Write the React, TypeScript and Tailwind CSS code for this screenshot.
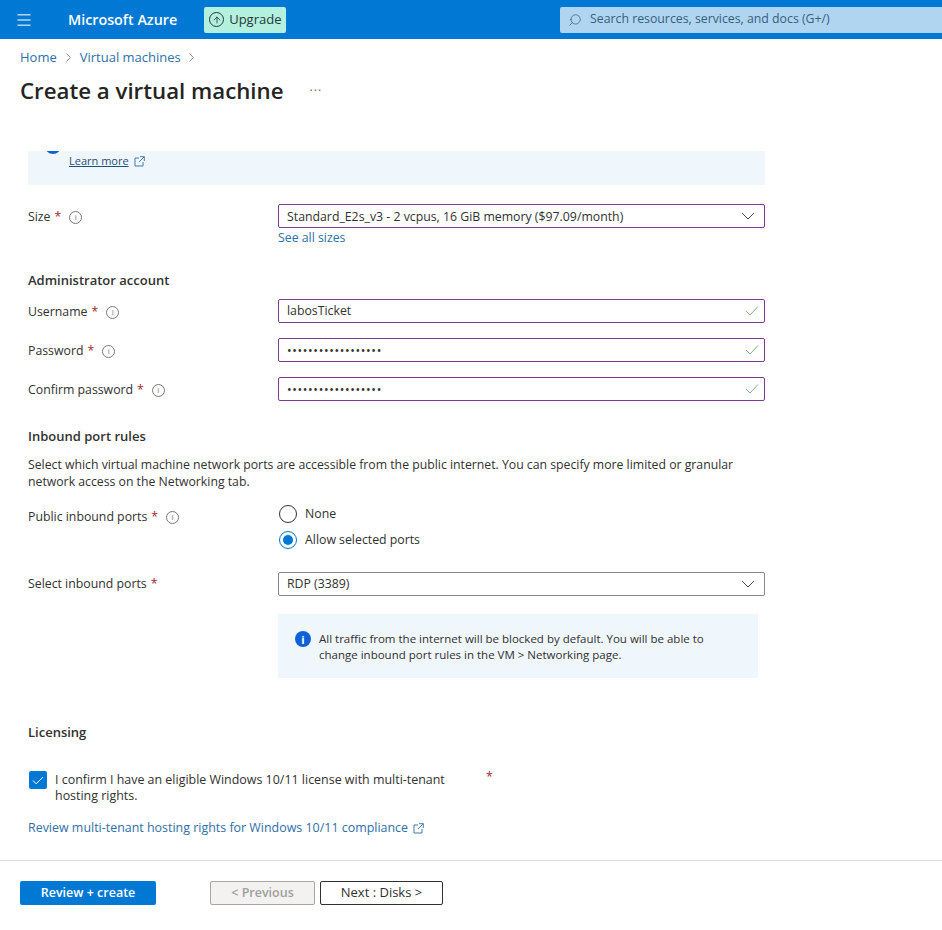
import React from 'react';
import { Search, ArrowUp, Menu, ChevronRight } from 'lucide-react';

const font = "font-['Open_Sans',sans-serif]";

const Req = () => <span className="text-[#a4262c] ml-1">*</span>;

const Tip = () => (
  <span className="ml-2 inline-flex h-[13px] w-[13px] items-center justify-center rounded-full border border-[#777] text-[8px] leading-none text-[#777]">i</span>
);

const Chevron = () => (
  <svg width="14" height="8" viewBox="0 0 14 8" fill="none" className="mr-[1px] text-[#444]">
    <path d="M1 1l6 6 6-6" stroke="currentColor" strokeWidth="1" />
  </svg>
);

const Tick = () => (
  <svg width="14" height="10" viewBox="0 0 14 10" fill="none" className="text-[#7fb07b]">
    <path d="M1 5l4 4 8-8.5" stroke="currentColor" strokeWidth="1" />
  </svg>
);

const LinkOut = () => (
  <svg width="11" height="11" viewBox="0 0 11 11" fill="none" className="ml-[5px] inline-block text-[#2f6fa8]">
    <path d="M5 2H1v8h8V6M6 .7h4.3V5M10.3.7L5 6" stroke="currentColor" strokeWidth="0.9" />
  </svg>
);

const Field = ({ label, value, className = '' }: { label: string; value: string; className?: string }) => (
  <div className={`flex items-center ${className}`}>
    <div className="w-[250px] pt-[2px] flex items-center text-[#323130]">
      {label}
      <Req />
      <Tip />
    </div>
    <div className="w-[487px] h-6 border border-[#7a3b8f] rounded-[2px] flex items-center justify-between pl-2 pr-[5px]">
      <span className={value.startsWith('•') ? 'tracking-[0.65px] pt-[2px]' : ''}>{value}</span>
      <Tick />
    </div>
  </div>
);

export default function App() {
  return (
    <div className={`${font} h-[930px] w-[942px] bg-white text-[12.3px] text-[#323130] flex flex-col overflow-hidden`}>
      <header className="h-[39px] bg-[#0078d4] flex items-center shrink-0">
        <Menu size={18} strokeWidth={2} className="ml-[15px] text-[#b3d7f2]" />
        <span className="ml-[35px] text-[14.3px] font-semibold text-white">Microsoft Azure</span>
        <div className="ml-[27px] h-[26px] w-[82px] rounded-[2px] bg-[#b4f0de] flex items-center pl-[5px] gap-[5px] text-[13px] text-[#1f3b3a]">
          <span className="h-[15px] w-[15px] rounded-full border border-[#1f3b3a] flex items-center justify-center">
            <ArrowUp size={10} strokeWidth={2} />
          </span>
          Upgrade
        </div>
        <div className="ml-auto h-[26px] w-[382px] rounded-l-[2px] bg-[#b0d5f0] flex items-center pl-2 gap-[8px] text-[#35607f]">
          <Search size={14} strokeWidth={1.3} className="-scale-x-100" />
          Search resources, services, and docs (G+/)
        </div>
      </header>

      <nav className="mt-[9px] ml-5 flex items-center text-[#2f6fa8] text-[13px] leading-[18px]">
        Home
        <ChevronRight size={15} strokeWidth={1.2} className="mx-[4px] text-[#666]" />
        Virtual machines
        <ChevronRight size={15} strokeWidth={1.2} className="mx-[3px] text-[#666]" />
      </nav>

      <div className="mt-[9px] ml-5 flex items-center">
        <h1 className="text-[22.25px] leading-8 font-semibold text-[#252423]">Create a virtual machine</h1>
        <span className="ml-[26px] text-[#666] tracking-[1px] leading-none">···</span>
      </div>

      <main className="mt-[44px] h-[709px] overflow-hidden px-7 shrink-0 border-b border-[#dcdcdc] box-content">
        <div className="h-[34px] w-[737px] bg-[#eff6fc] overflow-hidden relative pl-[41px] flex items-start">
          <a className="text-[11px] leading-[19px] text-[#1d4f7c] underline">Learn more</a>
          <span className="mt-[1px]"><LinkOut /></span>
          <span className="absolute left-[17px] -top-[13px] h-4 w-4 rounded-full bg-[#0f62d6]" />
        </div>

        <div className="mt-[19px] flex items-center">
          <div className="w-[250px] pt-[2px] flex items-center">Size<Req /><Tip /></div>
          <div className="w-[487px] h-6 border border-[#7a3b8f] rounded-[2px] flex items-center justify-between pl-2 pr-2">
            <span className="pt-[2px]">Standard_E2s_v3 - 2 vcpus, 16 GiB memory ($97.09/month)</span>
            <Chevron />
          </div>
        </div>
        <a className="block ml-[250px] mt-[1px] text-[#2f6fa8] leading-[18px]">See all sizes</a>

        <h2 className="mt-[24px] font-semibold text-[13px] leading-[18px]">Administrator account</h2>
        <Field className="mt-[10px]" label="Username" value="labosTicket" />
        <Field className="mt-[15px]" label="Password" value="••••••••••••••••••" />
        <Field className="mt-[15px]" label="Confirm password" value="••••••••••••••••••" />

        <h2 className="mt-[26px] font-semibold text-[13px] leading-[18px]">Inbound port rules</h2>
        <p className="mt-[11px] w-[737px] text-[12.25px] leading-[17px]">
          Select which virtual machine network ports are accessible from the public internet. You can specify more limited or granular network access on the Networking tab.
        </p>

        <div className="mt-[15px] flex">
          <div className="w-[250px] flex items-center h-[18px] mt-[3px]">Public inbound ports<Req /><Tip /></div>
          <div className="flex flex-col gap-2">
            <label className="flex items-center gap-2 h-[18px]">
              <span className="ml-[1px] h-[18px] w-[18px] rounded-full border border-[#323130]" />
              None
            </label>
            <label className="flex items-center gap-2 h-[18px]">
              <span className="ml-[1px] h-[18px] w-[18px] rounded-full border border-[#0078d4] flex items-center justify-center">
                <span className="h-[10px] w-[10px] rounded-full bg-[#0078d4]" />
              </span>
              Allow selected ports
            </label>
          </div>
        </div>

        <div className="mt-[23px] flex items-center">
          <div className="w-[250px] flex items-center">Select inbound ports<Req /></div>
          <div className="w-[487px] h-6 border border-[#8a8886] rounded-[2px] flex items-center justify-between pl-2 pr-2">
            RDP (3389)
            <Chevron />
          </div>
        </div>

        <div className="mt-[18px] ml-[250px] w-[480px] h-16 bg-[#eff6fc] flex gap-2 pl-[17px] pt-[17px] text-[11.5px] leading-4">
          <span className="flex h-4 w-4 shrink-0 items-center justify-center rounded-full bg-[#0f62d6] text-[11px] font-bold leading-none text-white">i</span>
          <p className="w-[420px]">All traffic from the internet will be blocked by default. You will be able to change inbound port rules in the VM &gt; Networking page.</p>
        </div>

        <h2 className="mt-[45px] font-semibold text-[13px] leading-[18px]">Licensing</h2>

        <div className="mt-[30px] flex text-[12.45px]">
          <span className="ml-[1px] h-[18px] w-[18px] rounded-[2px] bg-[#0078d4] flex items-center justify-center shrink-0">
            <svg width="12" height="9" viewBox="0 0 12 9" fill="none"><path d="M1 4.5l3.2 3.3L11 1" stroke="white" strokeWidth="1" /></svg>
          </span>
          <p className="ml-[8px] w-[416px] pt-[1px] leading-4">I confirm I have an eligible Windows 10/11 license with multi-tenant hosting rights.</p>
          <span className="ml-[15px] text-[#a4262c] leading-4 -mt-[2px]">*</span>
        </div>

        <a className="mt-[15px] flex items-center text-[12.45px] text-[#2f6fa8] leading-[18px]">
          Review multi-tenant hosting rights for Windows 10/11 compliance
          <LinkOut />
        </a>
      </main>

      <footer className="mt-5 ml-5 flex items-center text-[12.5px]">
        <button className="h-6 w-[136px] rounded-[2px] bg-[#0078d4] font-semibold text-white">Review + create</button>
        <button className="ml-[54px] h-6 w-[105px] rounded-[2px] border border-[#a8a6a4] bg-[#f3f2f1] font-semibold text-[#a19f9d]">&lt; Previous</button>
        <button className="ml-[5px] h-6 w-[123px] rounded-[2px] border border-[#323130] text-[#323130] text-[13px]">Next : Disks &gt;</button>
      </footer>
    </div>
  );
}
